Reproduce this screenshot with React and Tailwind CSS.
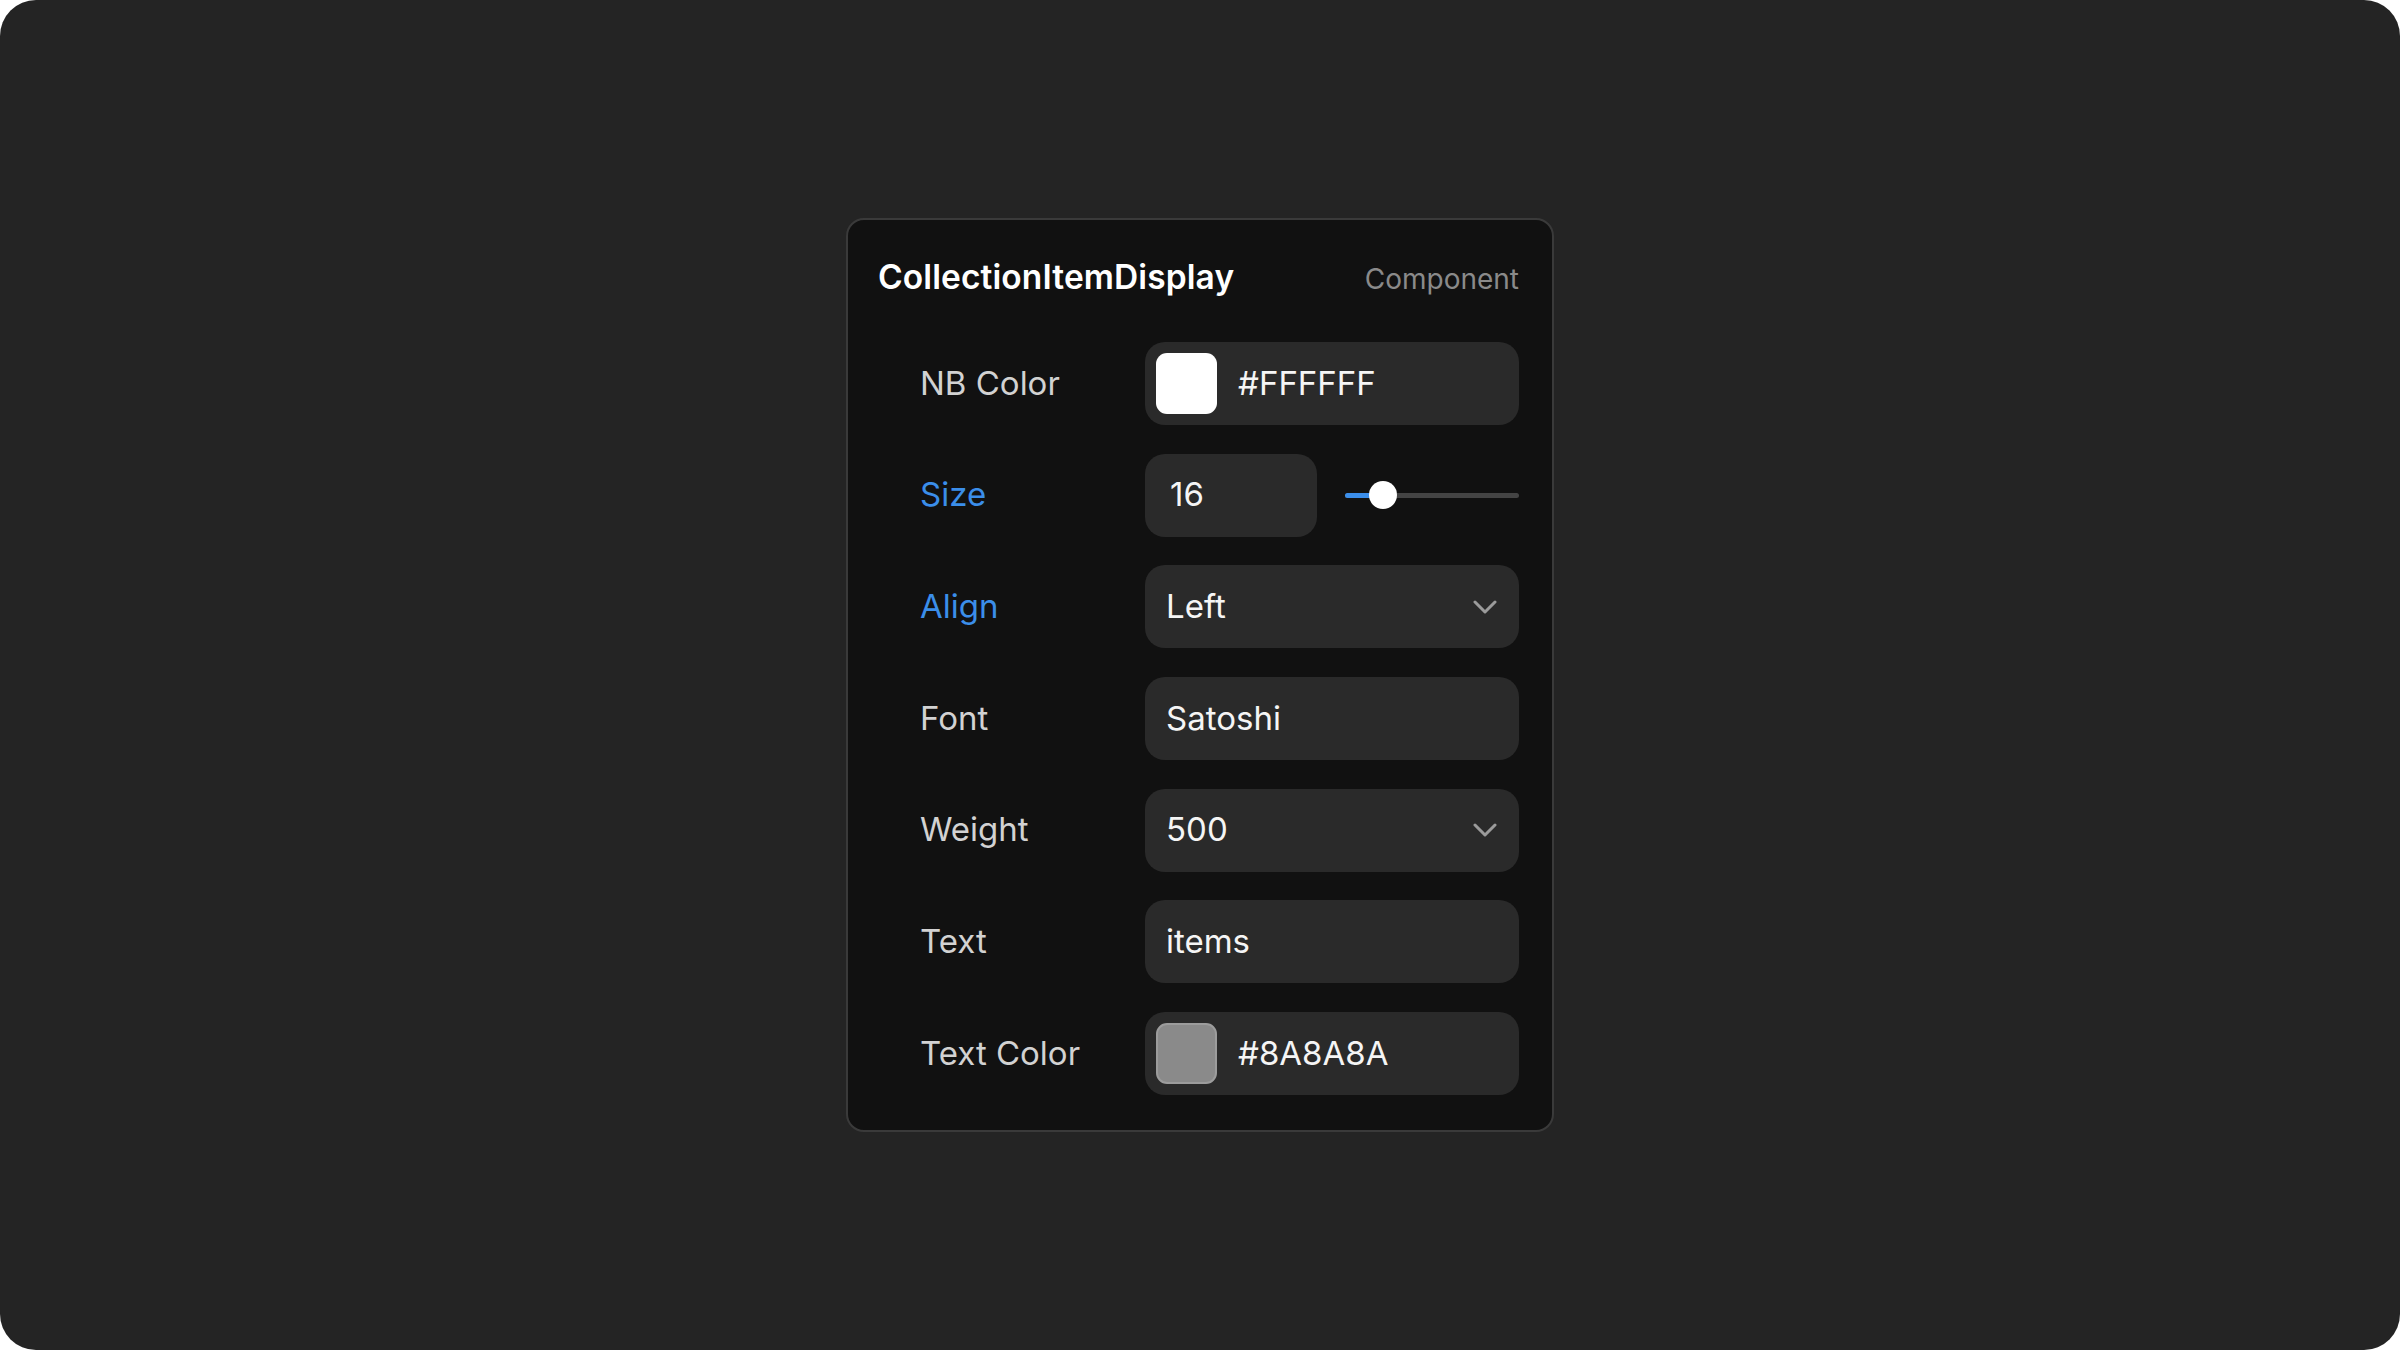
import React from 'react';

const font = { fontFamily: 'Inter, "Noto Sans", sans-serif' };

function Chevron() {
  return (
    <svg width="24" height="14" viewBox="0 0 24 14" fill="none" className="shrink-0">
      <path d="M2 2l10 10L22 2" stroke="#9b9b9b" strokeWidth="3" strokeLinecap="round" strokeLinejoin="round" />
    </svg>
  );
}

function ColorField({ swatch, value, ring }) {
  return (
    <div className="flex h-[83px] items-center rounded-[20px] bg-[#2a2a2a] pl-[11px]">
      <div className={`h-[61px] w-[61px] rounded-[11px] ${swatch} ${ring}`} />
      <span className="ml-[21px] text-[33px] text-[#f5f5f5]">{value}</span>
    </div>
  );
}

function TextField({ value, select }) {
  return (
    <div className="flex h-[83px] items-center justify-between rounded-[20px] bg-[#2a2a2a] pl-[21px] pr-[22px]">
      <span className="text-[33px] text-[#f5f5f5]">{value}</span>
      {select && <Chevron />}
    </div>
  );
}

function SizeField() {
  return (
    <div className="flex h-[83px] items-center gap-[28px]">
      <div className="flex h-[83px] w-[172px] items-center rounded-[20px] bg-[#2a2a2a] pl-[25px]">
        <span className="text-[33px] text-[#f5f5f5]">16</span>
      </div>
      <div className="relative flex h-[28px] flex-1 items-center">
        <div className="h-[5px] w-full rounded-full bg-[#444444]" />
        <div className="absolute left-0 top-[11.5px] h-[5px] w-[38px] rounded-full bg-[#3b8eea]" />
        <div className="absolute left-[24px] top-0 h-[28px] w-[28px] rounded-full bg-white" />
      </div>
    </div>
  );
}

const rows = [
  { label: 'NB Color', field: <ColorField swatch="bg-white" value="#FFFFFF" ring="" /> },
  { label: 'Size', blue: true, field: <SizeField /> },
  { label: 'Align', blue: true, field: <TextField value="Left" select /> },
  { label: 'Font', field: <TextField value="Satoshi" /> },
  { label: 'Weight', field: <TextField value="500" select /> },
  { label: 'Text', field: <TextField value="items" /> },
  { label: 'Text Color', field: <ColorField swatch="bg-[#8a8a8a]" value="#8A8A8A" ring="border-2 border-[#9c9c9c]" /> },
];

export default function App() {
  return (
    <div className="h-screen w-full bg-white" style={font}>
      <div className="flex h-full w-full items-center justify-center rounded-[36px] bg-[#242424]">
        <div className="w-[708px] rounded-[18px] border-2 border-[#3a3a3a] bg-[#111111] pb-[35px] pl-[30px] pr-[33px] pt-[37px]">
          <div className="flex items-baseline justify-between">
            <h1 className="text-[33.5px] font-semibold leading-[40px] tracking-[0.1px] text-white">CollectionItemDisplay</h1>
            <span className="text-[28px] text-[#8a8a8a]">Component</span>
          </div>
          <div className="mt-[42px] grid grid-cols-[267px_1fr] gap-y-[28.7px]">
            {rows.map((r) => (
              <React.Fragment key={r.label}>
                <div className={`flex items-center pl-[42px] text-[33px] ${r.blue ? 'text-[#3b8eea]' : 'text-[#d2d2d2]'}`}>
                  {r.label}
                </div>
                {r.field}
              </React.Fragment>
            ))}
          </div>
        </div>
      </div>
    </div>
  );
}
